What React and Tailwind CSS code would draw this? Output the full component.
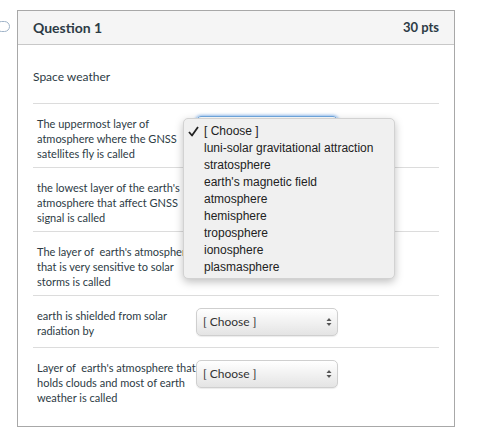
const rows = [
  { label: 'The uppermost layer of atmosphere where the GNSS satellites fly is called', focused: true },
  { label: "the lowest layer of the earth's atmosphere that affect GNSS signal is called" },
  { label: "The layer of\u00a0 earth's atmosphere that is very sensitive to solar storms is called" },
  { label: 'earth is shielded from solar radiation by' },
  { label: "Layer of\u00a0 earth's atmosphere that holds clouds and most of earth weather is called" },
]

const options = [
  'luni-solar gravitational attraction',
  'stratosphere',
  "earth's magnetic field",
  'atmosphere',
  'hemisphere',
  'troposphere',
  'ionosphere',
  'plasmasphere',
]

function Arrows() {
  return (
    <svg width="6" height="10" viewBox="0 0 6 10" className="shrink-0">
      <path d="M3 1 L5.5 4 H0.5 Z" fill="#555" />
      <path d="M3 9 L5.5 6 H0.5 Z" fill="#555" />
    </svg>
  )
}

function Select({ focused }) {
  const ring = focused
    ? 'border-[#6fa8e0] shadow-[0_0_3px_1px_rgba(80,150,230,0.6)]'
    : 'border-[#cfcfcf] shadow-[0_1px_1px_rgba(0,0,0,0.08)]'
  return (
    <div className={`w-[142px] h-[28px] mb-[5px] shrink-0 flex items-center justify-between pl-[6px] pr-[5px] rounded-[5px] border bg-linear-to-b from-white to-[#e4e4e4] ${ring}`}>
      <span className="text-[12px] text-[#333]">[ Choose ]</span>
      <Arrows />
    </div>
  )
}

function Check() {
  return (
    <svg width="11" height="11" viewBox="0 0 11 11" className="ml-[4px] mr-[5px] mt-[3px] shrink-0">
      <path d="M1 6 L4 9.5 L10 1" fill="none" stroke="#222" strokeWidth="1.8" strokeLinejoin="round" />
    </svg>
  )
}

function Dropdown() {
  return (
    <div className="absolute left-[150px] top-[14px] w-[212px] h-[161px] py-[4px] rounded-[5px] bg-[#f0f0f0] border border-[#d2d2d2] shadow-[0_3px_8px_rgba(0,0,0,0.25)] font-['Liberation_Sans',Arial,sans-serif] text-[12px] leading-[17px] text-[#222]">
      <div className="flex">
        <Check />
        <span>[ Choose ]</span>
      </div>
      {options.map((o) => (
        <div key={o} className="pl-[20px]">{o}</div>
      ))}
    </div>
  )
}

export default function App() {
  return (
    <div className="w-[493px] h-[437px] bg-white pt-[10px] flex font-['Lato','Open_Sans',sans-serif] text-[#2d3b45] overflow-hidden">
      <div className="w-[14px] h-[11px] mt-[11px] -ml-[4px] rounded-full border border-[#9fb3c8] shrink-0" />
      <div className="ml-[7px] w-[438px] h-[417px] border border-[#a8a8a8] flex flex-col">
        <div className="h-[34px] shrink-0 bg-[#f5f5f5] border-b border-[#c8c8c8] px-[15px] flex items-center justify-between">
          <span className="text-[14px] font-bold">Question 1</span>
          <span className="text-[13px] font-bold">30 pts</span>
        </div>
        <div className="px-[15px] pt-[24px]">
          <p className="text-[12px] leading-[15px] pb-[19px] border-b border-[#dcdcdc]">Space weather</p>
          <div className="relative">
            {rows.map((r, i) => (
              <div key={i} className={`flex pl-[4px] pt-[12px] pb-[6px] ${i < rows.length - 1 ? 'border-b border-[#dcdcdc]' : ''}`}>
                <div className="w-[159px] shrink-0 text-[11px] leading-[15px]">{r.label}</div>
                <Select focused={r.focused} />
              </div>
            ))}
            <Dropdown />
          </div>
        </div>
      </div>
    </div>
  )
}
